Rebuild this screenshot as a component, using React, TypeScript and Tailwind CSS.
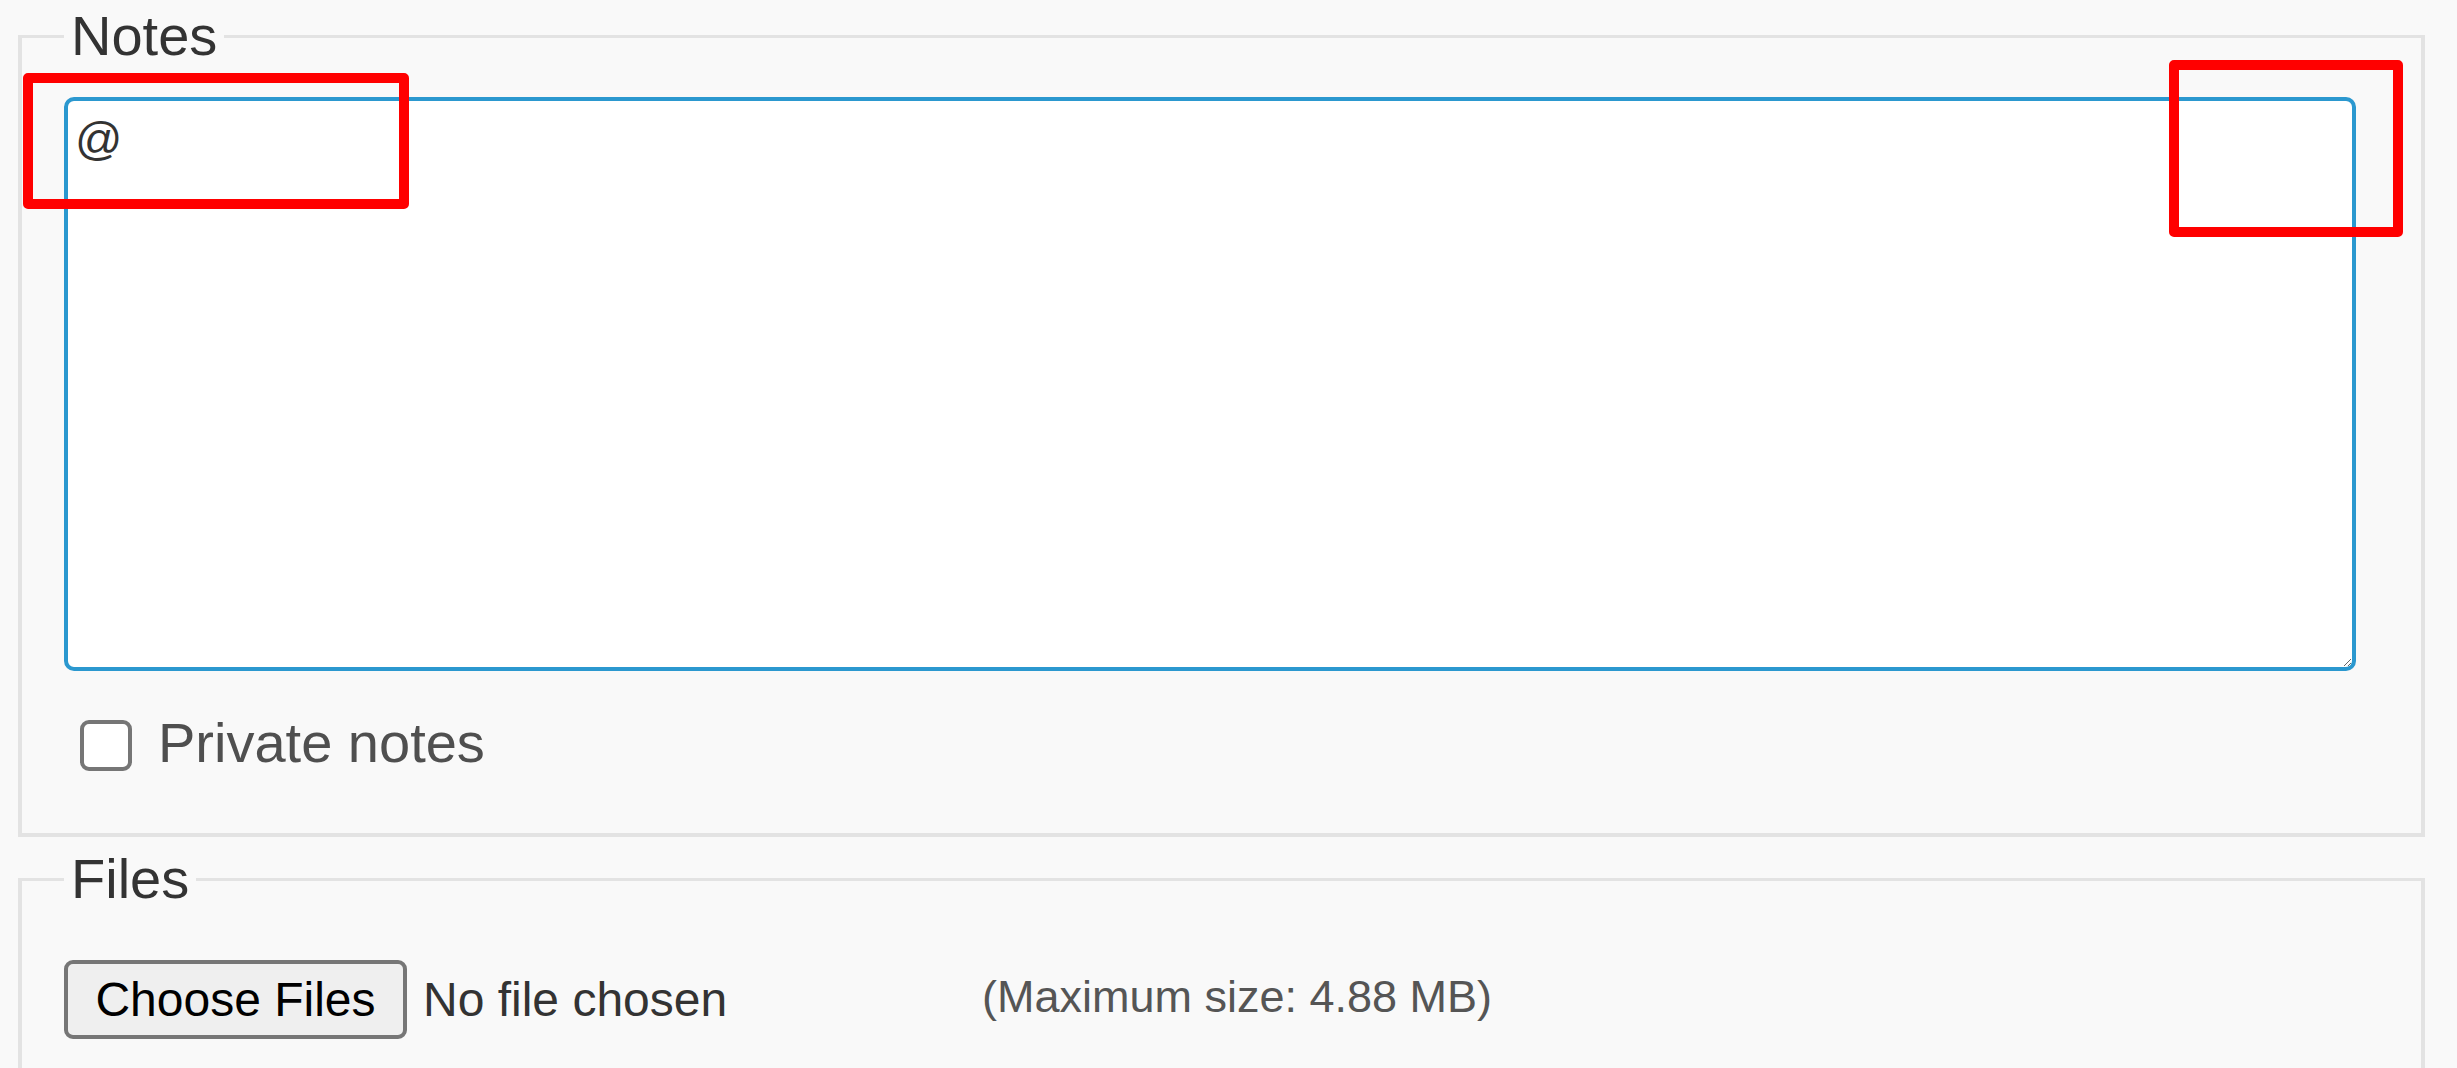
export default function App() {
  return (
    <div className="relative min-h-screen bg-[#f9f9f9] pl-[18px] pr-[32px] font-['Liberation_Sans',Arial,sans-serif]">
      {/* notes */}
      <fieldset className="border-4 border-t-[3px] border-[#e3e3e3] px-[42px] pt-[25px] pb-[58px]">
        <legend className="px-[7px] text-[56px] leading-[72px] text-[#333]">Notes</legend>
        <textarea
          defaultValue="@"
          className="block h-[574px] w-[2292px] rounded-[10px] border-4 border-[#2b98cf] bg-white px-[7px] pt-[3px] text-[46.7px] text-[#333] outline-none"
        />
        <label className="mt-[40px] flex h-[64px] items-start">
          <input
            type="checkbox"
            className="ml-[16px] mt-[9px] h-[51px] w-[52px] appearance-none rounded-[9px] border-4 border-[#767676] bg-white"
          />
          <span className="ml-[26px] text-[56px] leading-[64px] text-[#4f4f4f]">Private notes</span>
        </label>
      </fieldset>

      {/* files */}
      <fieldset className="mt-[6px] border-4 border-t-[3px] border-[#e3e3e3] px-[42px] pt-[45px] pb-[80px]">
        <legend className="px-[7px] text-[56px] leading-[72px] text-[#333]">Files</legend>
        <div className="flex items-center">
          <div className="flex w-[918px] items-center">
            <button
              type="button"
              className="h-[79px] w-[343px] rounded-[9px] border-4 border-[#767676] bg-[#efefef] text-[48px] text-black"
            >
              Choose Files
            </button>
            <span className="ml-[16px] text-[48px] text-[#333]">No file chosen</span>
          </div>
          <span className="pb-[6px] text-[45px] text-[#555]">(Maximum size: 4.88 MB)</span>
        </div>
      </fieldset>

      {/* annotation boxes */}
      <div className="absolute left-[23px] top-[73px] h-[136px] w-[386px] rounded-[5px] border-[10px] border-[#ff0000]" />
      <div className="absolute left-[2169px] top-[60px] h-[177px] w-[234px] rounded-[5px] border-[10px] border-[#ff0000]" />
    </div>
  )
}
